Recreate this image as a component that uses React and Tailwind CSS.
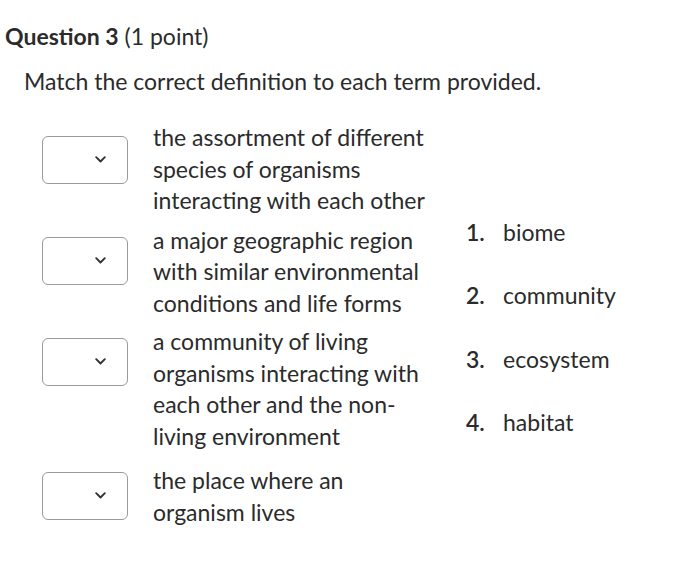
import React from 'react';

const rows = [
    {
        text: 'the assortment of different species of organisms interacting with each other',
        rowClass: 'mt-0',
        selectClass: 'mt-[14px]',
    },
    {
        text: 'a major geographic region with similar environmental conditions and life forms',
        rowClass: 'mt-[8px]',
        selectClass: 'mt-[12px]',
    },
    {
        text: 'a community of living organisms interacting with each other and the non-living environment',
        rowClass: 'mt-[7px]',
        selectClass: 'mt-[12px]',
    },
    {
        text: 'the place where an organism lives',
        rowClass: 'mt-[13px]',
        selectClass: 'mt-[7px]',
    },
];

const terms = ['biome', 'community', 'ecosystem', 'habitat'];

const Chevron = () => (
    <svg width="11" height="7" viewBox="0 0 11 7" fill="none">
        <path d="M1.2 1.2l4.3 4.3 4.3-4.3" stroke="#333" strokeWidth="1.9" strokeLinecap="round" strokeLinejoin="round" />
    </svg>
);

const App = () => {
    return (
        <div className="w-[700px] h-[561px] bg-white text-[#2b2b2b] font-['Lato','Liberation_Sans',sans-serif] overflow-hidden">
            {/* Header */}
            <div className="pl-[5px] pt-[21px] text-[23px] leading-[30px]">
                <span className="font-bold">Question 3</span> <span>(1 point)</span>
            </div>

            <p className="pl-[24px] mt-[15px] text-[23px] leading-[30px]">
                Match the correct definition to each term provided.
            </p>

            <div className="flex mt-[26px]">
                {/* Definitions with selects */}
                <div className="flex flex-col">
                    {rows.map((row, i) => (
                        <div key={i} className={`flex ${row.rowClass}`}>
                            <div className={`ml-[42px] w-[86px] h-[48px] border border-[#9a9a9a] rounded-[6px] flex items-center justify-end pr-[21px] pb-[1px] ${row.selectClass}`}>
                                <Chevron />
                            </div>
                            <div className="ml-[25px] w-[274px] text-[23px] leading-[31.5px]">
                                {row.text}
                            </div>
                        </div>
                    ))}
                </div>

                {/* Terms */}
                <ol className="ml-[39px] mt-[95px] flex flex-col gap-[33.3px] text-[23px] leading-[30px]">
                    {terms.map((t, i) => (
                        <li key={t} className="flex">
                            <span className="w-[37px] font-semibold">{i + 1}.</span>
                            <span>{t}</span>
                        </li>
                    ))}
                </ol>
            </div>
        </div>
    );
};

export default App;
